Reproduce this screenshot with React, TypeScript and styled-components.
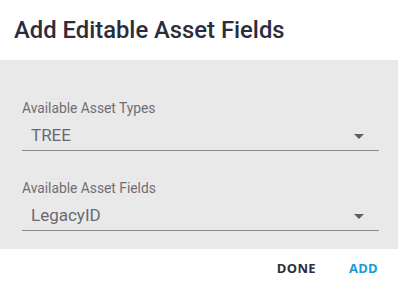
import { createGlobalStyle } from 'styled-components';
import styled from 'styled-components';

const GlobalStyle = createGlobalStyle`
  html, body {
    margin: 0;
    padding: 0;
    background: #ffffff;
  }
  body {
    font-family: Roboto, "Liberation Sans", sans-serif;
  }
`;

const Dialog = styled.div`
  width: 398px;
  height: 284px;
  display: flex;
  flex-direction: column;
  background: #ffffff;
`;

const Title = styled.h2`
  margin: 0;
  height: 60px;
  padding: 0 14px;
  display: flex;
  align-items: center;
  font-size: 23.8px;
  font-weight: 500;
  color: #2d2c3b;
`;

const Body = styled.div`
  height: 189px;
  box-sizing: border-box;
  background: #e9e9e9;
  padding: 40px 19px 0 22px;
  display: flex;
  flex-direction: column;
  gap: 29px;
`;

const Field = styled.div`
  display: flex;
  flex-direction: column;
`;

const Label = styled.label`
  font-size: 13.8px;
  color: #6f6e78;
  line-height: 16px;
`;

const Select = styled.div`
  height: 35px;
  box-sizing: border-box;
  border-bottom: 1px solid #8b8a94;
  padding: 0 15px 5px 9px;
  display: flex;
  align-items: flex-end;
  justify-content: space-between;
  font-size: 17px;
  line-height: 20px;
  color: #6a6973;
`;

const Arrow = styled.span`
  width: 0;
  height: 0;
  border-left: 5px solid transparent;
  border-right: 5px solid transparent;
  border-top: 5px solid #5e5e62;
  margin-bottom: 6px;
`;

const Actions = styled.div`
  flex: 1;
  display: flex;
  align-items: center;
  justify-content: flex-end;
  gap: 33px;
  padding: 2px 20px 0 0;
`;

const ActionButton = styled.button<{ $primary?: boolean }>`
  border: none;
  background: none;
  padding: 0;
  font-family: "Open Sans", "Liberation Sans", sans-serif;
  font-weight: 700;
  font-size: 13px;
  letter-spacing: 0.3px;
  color: ${(p) => (p.$primary ? '#1a9bd7' : '#2d2c3b')};
  cursor: pointer;
`;

export default function App() {
  return (
    <>
      <GlobalStyle />
      <Dialog>
        <Title>Add Editable Asset Fields</Title>
        <Body>
          <Field>
            <Label>Available Asset Types</Label>
            <Select>
              TREE
              <Arrow />
            </Select>
          </Field>
          <Field>
            <Label>Available Asset Fields</Label>
            <Select>
              LegacyID
              <Arrow />
            </Select>
          </Field>
        </Body>
        <Actions>
          <ActionButton>DONE</ActionButton>
          <ActionButton $primary>ADD</ActionButton>
        </Actions>
      </Dialog>
    </>
  );
}
